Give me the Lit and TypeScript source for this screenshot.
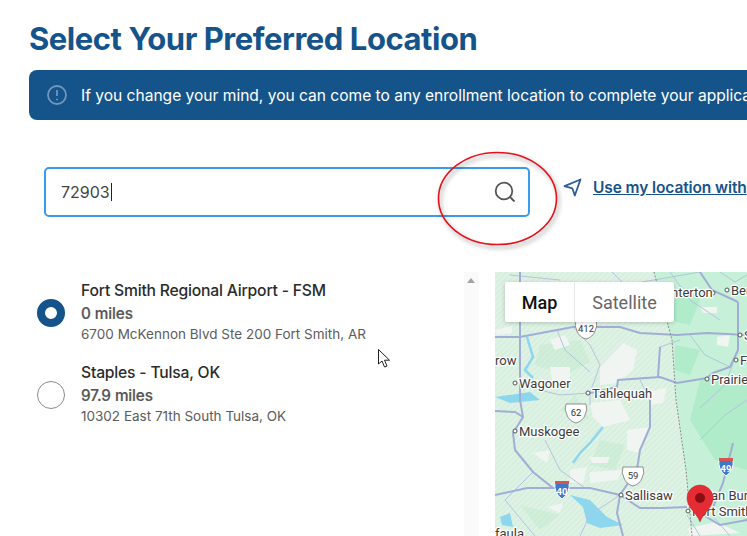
import { LitElement, html, css, svg } from "lit";
import { customElement } from "lit/decorators.js";

const roads = [
  "M495 337 L520 337 L557 330 L573 327 L620 327 L640 333 L677 335 L707 333 L747 335",
  "M520 272 L520 400 L523 417 L513 433 L515 450 L533 472 L553 488",
  "M495 495 L527 488 L590 488 L620 495 L640 508 L663 508 L687 507",
  "M650 400 L650 427 L640 450 L637 470 L620 495 L617 513 L623 536",
  "M738 302 L738 350 L730 367 L713 373 L707 378",
  "M707 378 L677 383 L660 377 L618 380 L617 387 L590 393",
  "M660 347 L658 377",
  "M733 443 L723 483 L712 510",
  "M700 272 L712 290 L738 302",
  "M690 507 L720 525 L747 520",
  "M495 411 L515 412 L523 417",
];
const thin = [
  "M573 327 L590 345 L600 365 L590 393 L590 405",
  "M557 330 L565 350 L590 372",
  "M520 385 L560 395 L590 393",
  "M650 400 L640 380",
  "M700 408 L725 385 L738 350",
  "M670 272 L690 300 L720 320",
  "M700 440 L725 415 L747 400",
  "M660 347 L680 340 M690 335 L705 355 L730 367",
  "M510 275 L560 280",
  "M533 472 L505 500 L535 536",
  "M585 488 L560 470 L545 440",
  "M620 495 L590 515 L580 536",
  "M720 272 L735 282 L747 275",
  "M612 272 L625 285 L700 272",
  "M687 515 L700 536 M712 515 L730 536",
];
const whites = [
  "M600 367 L623 343 L637 350 L633 370 L617 383 L600 385Z",
  "M550 367 L570 367 L570 383 L553 387Z",
  "M700 307 L717 307 L717 313 L703 313Z",
  "M717 337 L730 335 L728 347 L717 345Z",
  "M647 393 L667 387 L663 403 L650 405Z",
  "M590 403 L620 400 L630 420 L603 427 L593 417Z",
  "M627 430 L650 427 L640 453 L627 450Z",
  "M533 453 L550 450 L547 463Z",
  "M570 470 L587 467 L583 483 L570 483Z",
  "M590 457 L610 457 L607 463 L592 463Z",
  "M590 472 L623 470 L617 480 L590 483Z",
  "M547 507 L563 503 L560 513Z",
  "M550 340 L565 335 L570 345 L555 350Z",
  "M688 528 L717 522 L740 533 L690 536Z",
  "M495 330 L512 326 L512 333 L497 335Z",
];
const lakes = [
  "M570 495 L590 500 L607 517 L623 525 L600 528 L587 523 L583 507Z",
  "M500 517 L510 513 L513 527 L502 525Z",
  "M495 397 L530 392 L540 400 L510 403Z",
];
const streams = [
  "M527 337 L533 357 L525 370 L533 378",
  "M603 427 L590 443 L580 453 L573 463",
];

@customElement("app-root")
export class AppRoot extends LitElement {
  static styles = css`
    :host { display: block; position: relative; width: 747px; height: 536px; overflow: hidden; background: #fff; font-family: Inter, "Liberation Sans", sans-serif; color: #333; }
    main { padding: 18px 0 0 29px; width: 1000px; box-sizing: border-box; }
    h1 { margin: 0; font-size: 31px; line-height: 42px; font-weight: 700; color: #15548a; letter-spacing: -0.45px; }
    .banner { margin-top: 10px; height: 50px; width: 900px; background: #15548a; border-radius: 8px; display: flex; align-items: center; gap: 14px; padding-left: 18px; box-sizing: border-box; color: #fff; font-size: 15.55px; white-space: nowrap; }
    .banner svg { flex: none; }
    .search-row { display: flex; align-items: center; margin: 47px 0 0 15px; }
    .search { width: 486px; height: 50px; box-sizing: border-box; border: 2px solid #3b9bea; border-radius: 5px; display: flex; align-items: center; justify-content: space-between; padding: 0 12px 0 15px; font-size: 16px; color: #444; flex: none; }
    .value { display: flex; align-items: center; }
    .caret { width: 1px; height: 18px; background: #222; margin-left: 1px; }
    .locate { display: flex; align-items: center; margin: 0 0 10px 33px; gap: 11px; }
    .locate a { font-size: 15.5px; font-weight: 600; color: #15548a; text-decoration: underline; white-space: nowrap; letter-spacing: -0.1px; }
    .content { display: flex; margin: 55px 0 0 8px; align-items: flex-start; }
    .list { width: 427px; padding-top: 8px; display: flex; flex-direction: column; gap: 18px; flex: none; }
    .item { display: flex; align-items: center; gap: 16px; }
    .radio { width: 28px; height: 28px; margin-top: 2px; border-radius: 50%; border: 1px solid #8a8a8a; box-sizing: border-box; flex: none; background: #fff; }
    .radio.on { border: 8px solid #15548a; }
    .name { font-size: 15.7px; line-height: 22px; font-weight: 500; color: #2b2b2b; letter-spacing: -0.2px; }
    .miles { font-size: 15.3px; line-height: 23px; font-weight: 500; color: #555; letter-spacing: -0.1px; -webkit-text-stroke: 0.2px #555; }
    .addr { font-size: 13.5px; line-height: 19px; color: #5c5c5c; white-space: nowrap; }
    .scroll { width: 15px; height: 264px; background: #fafafa; position: relative; flex: none; }
    .scroll::before { content: ""; position: absolute; left: 3px; top: 6px; border: 4.5px solid transparent; border-top: 0; border-bottom: 5px solid #a3a3a3; }
    .map { margin-left: 16px; width: 300px; height: 264px; position: relative; overflow: hidden; flex: none; }
    .map svg { display: block; }
    .toggle { position: absolute; left: 10px; top: 10px; height: 40px; display: flex; background: #fff; border-radius: 2px; box-shadow: 0 1px 4px rgba(0,0,0,.2); font-family: Roboto, "Liberation Sans", sans-serif; font-size: 18px; }
    .toggle span { display: flex; align-items: center; justify-content: center; }
    .toggle .a { width: 69px; font-weight: 500; color: #111; border-right: 1px solid #e6e6e6; }
    .toggle .b { width: 99px; color: #666; }
    .ring { position: absolute; left: 430px; top: 145px; pointer-events: none; filter: drop-shadow(2px 3px 2px rgba(0,0,0,.4)); }
    .cursor { position: absolute; left: 377px; top: 348px; }
    .mlabel { font-family: Roboto, "Liberation Sans", sans-serif; font-size: 13px; fill: #3c3c3c; paint-order: stroke; stroke: #fff; stroke-width: 2.5px; stroke-linejoin: round; }
  `;

  private shield(x: number, y: number, n: string) {
    return svg`<path d="M${x - 10} ${y - 7} h20 q2 6 -1 11 q-2 6 -9 8 q-7 -2 -9 -8 q-3 -5 -1 -11z" fill="#fff" stroke="#777" stroke-width=".8"/>
      <text x=${x} y=${y + 5} text-anchor="middle" font-family="Roboto, sans-serif" font-size="9.5" fill="#333">${n}</text>`;
  }
  private interstate(x: number, y: number, n: string) {
    return svg`<path d="M${x - 7} ${y - 8} h14 q1.500 11 -7 17 q-8.500 -6 -7 -17z" fill="#3f78c9" stroke="#fff" stroke-width="1"/>
      <rect x=${x - 7} y=${y - 9} width="14" height="3" fill="#d9534f"/>
      <text x=${x} y=${y + 5} text-anchor="middle" font-family="Roboto, sans-serif" font-size="9.500" font-weight="700" fill="#fff">${n}</text>`;
  }
  private town(x: number, y: number, name: string) {
    return svg`<circle cx=${x} cy=${y} r="2" fill="#fff" stroke="#555" stroke-width="1"/>
      <text class="mlabel" x=${x + 4} y=${y + 4.500}>${name}</text>`;
  }

  private mapArt() {
    return html`<svg width="300" height="264" viewBox="495 272 300 264">
      <defs>
        <pattern id="hatch" width="4" height="4" patternUnits="userSpaceOnUse" patternTransform="rotate(-45)">
          <rect width="4" height="4" fill="#d7efdf"/>
          <rect width="4" height="1.300" fill="#e4f4e8"/>
        </pattern>
      </defs>
      <rect x="495" y="272" width="300" height="264" fill="#c6f1d8"/>
      <path d="M495 272 H654 L672 340 L676 400 L686 470 L692 536 H495Z" fill="url(#hatch)"/>
      <path d="M540 345 L580 340 L590 362 L565 375 L535 365Z M600 440 L625 445 L615 470 L590 465Z M590 420 L560 410 L575 395Z M520 505 L560 515 L540 530Z" fill="#bfe8cc" opacity=".45"/>
      <path d="M700 380 L747 375 V470 L715 460 L690 420Z M675 345 L700 350 L690 375 L675 370Z M680 285 L700 300 L690 325 L668 320Z" fill="#a6e8c4" opacity=".7"/>
      ${whites.map((d) => svg`<path d=${d} fill="#f1f5f1"/>`)}
      ${lakes.map((d) => svg`<path d=${d} fill="#8cd7ee"/>`)}
      ${streams.map((d) => svg`<path d=${d} fill="none" stroke="#8cd7ee" stroke-width="2.500"/>`)}
      ${thin.map((d) => svg`<path d=${d} fill="none" stroke="#b4c4de" stroke-width="1"/>`)}
      ${roads.map((d) => svg`<path d=${d} fill="none" stroke="#a0aed6" stroke-width="2"/>`)}
      <path d="M654 272 L672 340 L676 400 L686 470 L692 536" fill="none" stroke="#808080" stroke-width=".9" stroke-dasharray="2 1.500"/>
      ${this.shield(586, 327, "412")}
      ${this.shield(576, 411, "62")}
      ${this.shield(633, 474, "59")}
      ${this.interstate(562, 490, "40")}
      ${this.interstate(726, 467, "49")}
      ${this.town(515, 383, "Wagoner")}
      ${this.town(588, 393, "Tahlequah")}
      ${this.town(515, 431, "Muskogee")}
      ${this.town(621, 495, "Sallisaw")}
      ${this.town(688, 511, "Fort Smith")}
      <text class="mlabel" x="703" y="500">Van Buren</text>
      ${this.town(707, 379, "Prairie")}
      ${this.town(727, 290, "Ben")}
      ${this.town(713, 293, "")}
      ${this.town(740, 335, "S")}
      ${this.town(736, 360, "F")}
      <text class="mlabel" x="671" y="297">nterton</text>
      <text class="mlabel" x="495" y="365">row</text>
      <text class="mlabel" x="495" y="538">faula</text>
      <path d="M700 522 C697 513 687 508 687 498 A13 13 0 0 1 713 498 C713 508 703 513 700 522Z" fill="#e52b33" stroke="#c4242b" stroke-width=".5"/>
      <circle cx="700" cy="498" r="5" fill="#8a0f14"/>
    </svg>`;
  }

  render() {
    return html`
      <main>
        <h1>Select Your Preferred Location</h1>
        <div class="banner">
          <svg width="20" height="20" viewBox="0 0 20 20" fill="none" stroke="#6f97bd" stroke-width="1.800">
            <circle cx="10" cy="10" r="9"/>
            <path d="M10 5v6M10 13.700v1.500"/>
          </svg>
          <span>If you change your mind, you can come to any enrollment location to complete your application.</span>
        </div>
        <div class="search-row">
          <div class="search">
            <span class="value">72903<span class="caret"></span></span>
            <svg width="22" height="22" viewBox="0 0 22 22" fill="none" stroke="#555" stroke-width="1.800">
              <circle cx="10" cy="10" r="8.300"/>
              <path d="M16 16l4.500 4.500"/>
            </svg>
          </div>
          <div class="locate">
            <svg width="19" height="19" viewBox="0 0 19 19" fill="none" stroke="#2f5c96" stroke-width="1.800" stroke-linejoin="round">
              <path d="M1.500 8.200L17.500 1.500L11.800 17.500L9.300 10.300Z"/>
            </svg>
            <a>Use my location with</a>
          </div>
        </div>
        <div class="content">
          <div class="list">
            <div class="item">
              <div class="radio on"></div>
              <div>
                <div class="name">Fort Smith Regional Airport - FSM</div>
                <div class="miles">0 miles</div>
                <div class="addr">6700 McKennon Blvd Ste 200 Fort Smith, AR</div>
              </div>
            </div>
            <div class="item">
              <div class="radio"></div>
              <div>
                <div class="name">Staples - Tulsa, OK</div>
                <div class="miles">97.9 miles</div>
                <div class="addr">10302 East 71th South Tulsa, OK</div>
              </div>
            </div>
          </div>
          <div class="scroll"></div>
          <div class="map">
            ${this.mapArt()}
            <div class="toggle"><span class="a">Map</span><span class="b">Satellite</span></div>
          </div>
        </div>
      </main>
      <svg class="ring" width="140" height="110" viewBox="0 0 140 110" fill="none">
        <ellipse cx="67.500" cy="53.500" rx="59" ry="46" stroke="#e8101a" stroke-width="1.600"/>
      </svg>
      <svg class="cursor" width="14" height="21" viewBox="0 0 14 21">
        <path d="M1.500 1.500V16L5 13L7.500 19L10 18L7.500 12.200H12.500Z" fill="#fff" stroke="#222" stroke-width="1"/>
      </svg>
    `;
  }
}
